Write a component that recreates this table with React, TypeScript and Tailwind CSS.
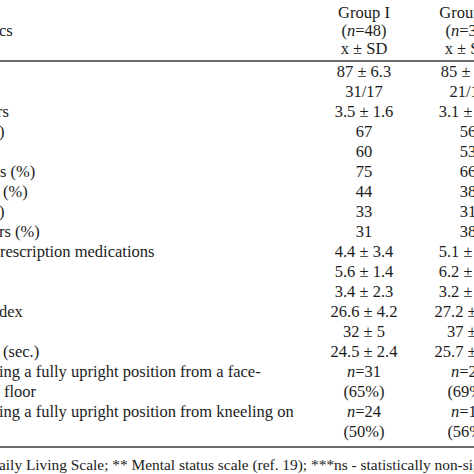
import React from "react";

type Row = { label: React.ReactNode; a: React.ReactNode; b: React.ReactNode };

const N = ({ v }: { v: string }) => (
  <>
    <i>n</i>={v}
  </>
);

const ROWS: Row[] = [
  { label: null, a: "87 ± 6.3", b: "85 ± 5.9" },
  { label: null, a: "31/17", b: "21/11" },
  { label: <span className="-ml-[3px]">rs</span>, a: "3.5 ± 1.6", b: "3.1 ± 1.4" },
  { label: <span className="-ml-[1px]">)</span>, a: "67", b: "56" },
  { label: null, a: "60", b: "53" },
  { label: <span>s (%)</span>, a: "75", b: "66" },
  { label: <span className="pl-[3px]">(%)</span>, a: "44", b: "38" },
  { label: <span className="-ml-[1px]">)</span>, a: "33", b: "31" },
  { label: <span className="-ml-[1px]">rs (%)</span>, a: "31", b: "38" },
  { label: <span>rescription medications</span>, a: "4.4 ± 3.4", b: "5.1 ± 3.0" },
  { label: null, a: "5.6 ± 1.4", b: "6.2 ± 1.1" },
  { label: null, a: "3.4 ± 2.3", b: "3.2 ± 2.1" },
  { label: <span className="-ml-[1px]">dex</span>, a: "26.6 ± 4.2", b: "27.2 ± 3.9" },
  { label: null, a: "32 ± 5", b: "37 ± 6" },
  { label: <span className="pl-[3px]">(sec.)</span>, a: "24.5 ± 2.4", b: "25.7 ± 2.1" },
  {
    label: <span className="-ml-[1px]">ing a fully upright position from a face-</span>,
    a: <N v="31" />,
    b: <N v="22" />,
  },
  { label: <span className="pl-[4px]">floor</span>, a: "(65%)", b: "(69%)" },
  {
    label: <span className="-ml-[1px]">ing a fully upright position from kneeling on</span>,
    a: <N v="24" />,
    b: <N v="18" />,
  },
  { label: null, a: "(50%)", b: "(56%)" },
];

const cols = "grid grid-cols-[312px_104px_104px]";

export default function App() {
  return (
    <div
      className="w-[474px] h-[474px] overflow-hidden bg-white text-[#1c1c1c] text-[16.5px] leading-[20px]"
      style={{ fontFamily: '"Liberation Serif", "Times New Roman", serif' }}
    >
      <div className="w-[520px]">
        {/* header */}
        <div className={`${cols} pt-[4px] leading-[18px]`}>
          <div className="flex flex-col">
            <span className="h-[18px]" />
            <span className="-ml-[1px]">cs</span>
          </div>
          <div className="flex flex-col items-center">
            <span>Group I</span>
            <span>
              (<i>n</i>=48)
            </span>
            <span>x ± SD</span>
          </div>
          <div className="flex flex-col items-center">
            <span>Group II</span>
            <span>
              (<i>n</i>=32)
            </span>
            <span>x ± SD</span>
          </div>
        </div>
        <div className="mt-[2px] h-[2px] bg-[#6b6b6b]" />

        {/* body */}
        <div className="flex flex-col">
          {ROWS.map((r, i) => (
            <div key={i} className={`${cols} h-[20px]`}>
              <div className="whitespace-nowrap overflow-hidden">{r.label}</div>
              <div className="text-center whitespace-nowrap">{r.a}</div>
              <div className="text-center whitespace-nowrap">{r.b}</div>
            </div>
          ))}
        </div>
        <div className="mt-[4px] h-[2px] bg-[#6b6b6b]" />

        <div className="mt-[7px] whitespace-nowrap text-[15.4px]">
          <span className="-ml-[1px]">
            aily Living Scale; ** Mental status scale (ref. 19); ***ns - statistically non-significant
          </span>
        </div>
      </div>
    </div>
  );
}
